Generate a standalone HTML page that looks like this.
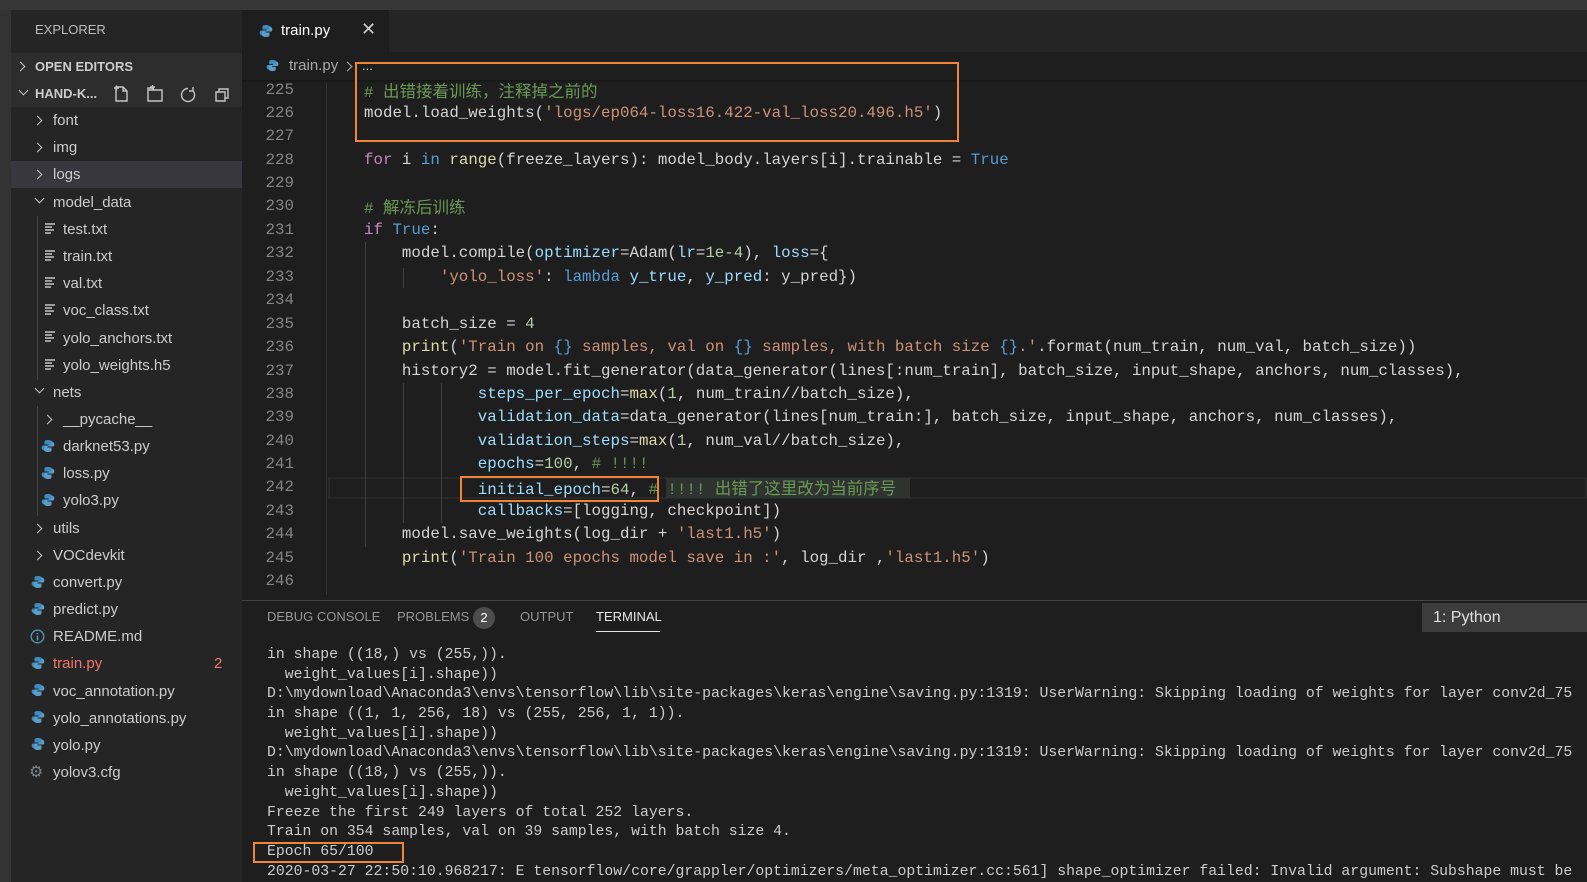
<!DOCTYPE html>
<html><head><meta charset="utf-8"><style>
*{margin:0;padding:0;box-sizing:border-box}
body{width:1587px;height:882px;overflow:hidden;background:#1e1e1e;position:relative;font-family:"Liberation Sans","Noto Sans CJK SC",sans-serif}
.abs{position:absolute}
.side{left:11px;top:10px;width:231px;height:872px;background:#252526}
.row{position:absolute;height:27px;line-height:27px;font-size:15px;color:#cccccc;white-space:nowrap}
.chev{position:absolute;width:7px;height:7px;border-right:1.5px solid #c5c5c5;border-bottom:1.5px solid #c5c5c5}
.cr{transform:rotate(-45deg)}
.cd{transform:rotate(45deg)}
.code{position:absolute;left:364px;font-family:"Liberation Mono","Noto Sans CJK SC",monospace;font-size:15.8px;color:#d4d4d4;white-space:pre;line-height:23px}
.ln{position:absolute;left:250px;width:44px;text-align:right;font-family:"Liberation Mono",monospace;font-size:15.8px;color:#858585;line-height:23px}
.c{color:#6a9955}.s{color:#ce9178}.k{color:#569cd6}.p{color:#c586c0}.f{color:#dcdcaa}.v{color:#9cdcfe}.n{color:#b5cea8}
.cj{font-family:"Noto Sans CJK SC",sans-serif;font-size:16.5px}
.term{position:absolute;left:267px;font-family:"Liberation Mono",monospace;font-size:14.8px;color:#cccccc;white-space:pre;line-height:20px}
.box{position:absolute;border:2px solid #f0853a}
.guide{position:absolute;width:1px;background:#404040}
</style></head><body>
<div class="abs" style="left:0;top:0;width:1587px;height:10px;background:#373737"></div>
<div class="abs" style="left:0;top:10px;width:11px;height:872px;background:#333333"></div>
<div class="abs side"></div>
<div class="abs" style="left:35px;top:22px;font-size:13px;color:#bbbbbb">EXPLORER</div>
<div class="abs" style="left:11px;top:53px;width:231px;height:54px;background:#2d2d2e"></div>
<div class="abs" style="left:11px;top:161px;width:231px;height:27px;background:#37373d"></div>

<div class="chev cr" style="left:17px;top:63px"></div>
<div class="row" style="left:35px;top:53px;font-weight:bold;font-size:13px;color:#cccccc">OPEN EDITORS</div>
<div class="chev cd" style="left:20px;top:87px"></div>
<div class="row" style="left:35px;top:80px;font-weight:bold;font-size:13px">HAND-K...</div>
<svg class="abs" style="left:112px;top:84px" width="122" height="20" viewBox="0 0 122 20" fill="none" stroke="#c5c5c5" stroke-width="1.4">
<path d="M4 3h7l4 4v10H4z M11 3v4h4 M2 4h5 M4.5 1.5v5"/>
<path d="M36 6h14v11H36z M36 6V4h5l1 2 M38 3h5 M40.5 1v5"/>
<path d="M76 4.5a6.5 6.5 0 1 0 5 2.3 M81 3v4h-4"/>
<path d="M104 8h9v9h-9z M107 8V5h9v9h-3"/>
</svg>
<div class="chev cr" style="left:34px;top:117px"></div><div class="row" style="left:53px;top:107px">font</div>
<div class="chev cr" style="left:34px;top:144px"></div><div class="row" style="left:53px;top:134px">img</div>
<div class="chev cr" style="left:34px;top:171px"></div><div class="row" style="left:53px;top:161px">logs</div>
<div class="chev cd" style="left:36px;top:195px"></div><div class="row" style="left:53px;top:189px">model_data</div>
<div class="abs" style="left:37px;top:216px;width:1px;height:164px;background:#444"></div>
<div class="abs" style="left:37px;top:406px;width:1px;height:110px;background:#444"></div>
<svg width="0" height="0" style="position:absolute"><defs>
<symbol id="txt" viewBox="0 0 12 12"><path d="M1 2h10M1 5h7M1 8h9M1 11h6" stroke="#c5c5c5" stroke-width="1.4"/></symbol>
<symbol id="py" viewBox="0 0 14 14"><path d="M7 1C3 1 3.5 2.5 3.5 4v1.5h4v1H2C0.5 6.5 0.5 9 1 10s1.5 1.5 2.5 1.5V9.5c0-1 1-2 2-2h3.5c1 0 2-1 2-2V3c0-1-1.5-2-4-2z" fill="#3d8bbf"/><path d="M7 13c4 0 3.5-1.5 3.5-3V8.5h-4v-1H12c1.5 0 1.5-2.5 1-3.5S11.5 2.5 10.5 2.5v2c0 1-1 2-2 2H5c-1 0-2 1-2 2V11c0 1 1.5 2 4 2z" fill="#5a9fc9"/></symbol>
</defs></svg>
<svg class="abs" style="left:44px;top:222px" width="12" height="12"><use href="#txt"/></svg><div class="row" style="left:63px;top:216px">test.txt</div>
<svg class="abs" style="left:44px;top:249px" width="12" height="12"><use href="#txt"/></svg><div class="row" style="left:63px;top:243px">train.txt</div>
<svg class="abs" style="left:44px;top:276px" width="12" height="12"><use href="#txt"/></svg><div class="row" style="left:63px;top:270px">val.txt</div>
<svg class="abs" style="left:44px;top:303px" width="12" height="12"><use href="#txt"/></svg><div class="row" style="left:63px;top:297px">voc_class.txt</div>
<svg class="abs" style="left:44px;top:330px" width="12" height="12"><use href="#txt"/></svg><div class="row" style="left:63px;top:325px">yolo_anchors.txt</div>
<svg class="abs" style="left:44px;top:358px" width="12" height="12"><use href="#txt"/></svg><div class="row" style="left:63px;top:352px">yolo_weights.h5</div>
<div class="chev cd" style="left:36px;top:385px"></div><div class="row" style="left:53px;top:379px">nets</div>
<div class="chev cr" style="left:44px;top:416px"></div><div class="row" style="left:63px;top:406px">__pycache__</div>
<svg class="abs" style="left:41px;top:439px" width="14" height="14"><use href="#py"/></svg><div class="row" style="left:63px;top:433px">darknet53.py</div>
<svg class="abs" style="left:41px;top:466px" width="14" height="14"><use href="#py"/></svg><div class="row" style="left:63px;top:460px">loss.py</div>
<svg class="abs" style="left:41px;top:493px" width="14" height="14"><use href="#py"/></svg><div class="row" style="left:63px;top:487px">yolo3.py</div>
<div class="chev cr" style="left:34px;top:525px"></div><div class="row" style="left:53px;top:515px">utils</div>
<div class="chev cr" style="left:34px;top:552px"></div><div class="row" style="left:53px;top:542px">VOCdevkit</div>
<svg class="abs" style="left:31px;top:575px" width="14" height="14"><use href="#py"/></svg><div class="row" style="left:53px;top:569px">convert.py</div>
<svg class="abs" style="left:31px;top:602px" width="14" height="14"><use href="#py"/></svg><div class="row" style="left:53px;top:596px">predict.py</div>
<svg class="abs" style="left:30px;top:629px" width="15" height="15" viewBox="0 0 15 15"><circle cx="7.5" cy="7.5" r="6.3" fill="none" stroke="#519aba" stroke-width="1.3"/><path d="M7.5 6.5v5M7.5 4v1.3" stroke="#519aba" stroke-width="1.5"/></svg><div class="row" style="left:53px;top:623px">README.md</div>
<svg class="abs" style="left:31px;top:656px" width="14" height="14"><use href="#py"/></svg><div class="row" style="left:53px;top:650px;color:#f0776b">train.py</div><div class="row" style="left:214px;top:650px;color:#f0776b">2</div>
<svg class="abs" style="left:31px;top:683px" width="14" height="14"><use href="#py"/></svg><div class="row" style="left:53px;top:678px">voc_annotation.py</div>
<svg class="abs" style="left:31px;top:710px" width="14" height="14"><use href="#py"/></svg><div class="row" style="left:53px;top:705px">yolo_annotations.py</div>
<svg class="abs" style="left:31px;top:737px" width="14" height="14"><use href="#py"/></svg><div class="row" style="left:53px;top:732px">yolo.py</div>
<div class="abs" style="left:29px;top:762px;font-size:16px;color:#7e8488">⚙</div><div class="row" style="left:53px;top:759px">yolov3.cfg</div>

<!-- tabs -->
<div class="abs" style="left:242px;top:10px;width:1345px;height:42px;background:#252526"></div>
<div class="abs" style="left:242px;top:10px;width:147px;height:42px;background:#1e1e1e"></div>
<svg class="abs" style="left:259px;top:24px" width="14" height="14"><use href="#py"/></svg>
<div class="abs" style="left:281px;top:22px;font-size:15px;color:#ffffff">train.py</div>
<div class="abs" style="left:361px;top:19px;font-size:18px;color:#cccccc">✕</div>
<svg class="abs" style="left:266px;top:59px" width="13" height="13"><use href="#py"/></svg>
<div class="abs" style="left:289px;top:57px;font-size:15px;color:#a9a9a9">train.py</div>
<div class="chev cr" style="left:344px;top:63px;border-color:#a9a9a9"></div>
<div class="abs" style="left:362px;top:58px;font-size:13px;color:#cccccc">...</div>
<div class="abs" style="left:242px;top:80px;width:1345px;height:3px;background:linear-gradient(#161616,#1e1e1e)"></div>

<!-- line numbers -->
<div class="ln" style="top:79px">225</div><div class="ln" style="top:102px">226</div><div class="ln" style="top:125px">227</div><div class="ln" style="top:149px">228</div><div class="ln" style="top:172px">229</div><div class="ln" style="top:195px">230</div><div class="ln" style="top:219px">231</div><div class="ln" style="top:242px">232</div><div class="ln" style="top:266px">233</div><div class="ln" style="top:289px">234</div><div class="ln" style="top:313px">235</div><div class="ln" style="top:336px">236</div><div class="ln" style="top:360px">237</div><div class="ln" style="top:383px">238</div><div class="ln" style="top:406px">239</div><div class="ln" style="top:430px">240</div><div class="ln" style="top:453px">241</div><div class="ln" style="top:476px">242</div><div class="ln" style="top:500px">243</div><div class="ln" style="top:523px">244</div><div class="ln" style="top:547px">245</div><div class="ln" style="top:570px">246</div>
<div class="abs" style="left:326px;top:83px;width:1px;height:512px;background:#333"></div>

<div class="abs" style="left:328px;top:477px;width:1259px;height:22px;border:2px solid #282828"></div>
<div class="abs" style="left:666px;top:478px;width:244px;height:20px;background:#2f3330"></div>
<div class="guide" style="left:365px;top:242px;height:305px"></div>
<div class="guide" style="left:403px;top:268px;height:20px"></div>
<div class="guide" style="left:403px;top:383px;height:140px"></div>
<div class="guide" style="left:441px;top:383px;height:140px"></div>

<div class="code" style="top:79px"><span class="c"># <span class="cj">出错接着训练，注释掉之前的</span></span></div>
<div class="code" style="top:102px">model.load_weights(<span class="s">'logs/ep064-loss16.422-val_loss20.496.h5'</span>)</div>
<div class="code" style="top:149px"><span class="p">for</span> i <span class="k">in</span> <span class="f">range</span>(freeze_layers): model_body.layers[i].trainable = <span class="k">True</span></div>
<div class="code" style="top:195px"><span class="c"># <span class="cj">解冻后训练</span></span></div>
<div class="code" style="top:219px"><span class="p">if</span> <span class="k">True</span>:</div>
<div class="code" style="top:242px">    model.compile(<span class="v">optimizer</span>=Adam(<span class="v">lr</span>=<span class="n">1e-4</span>), <span class="v">loss</span>={</div>
<div class="code" style="top:266px">        <span class="s">'yolo_loss'</span>: <span class="k">lambda</span> <span class="v">y_true</span>, <span class="v">y_pred</span>: y_pred})</div>
<div class="code" style="top:313px">    batch_size = <span class="n">4</span></div>
<div class="code" style="top:336px">    <span class="f">print</span>(<span class="s">'Train on </span><span class="k">{}</span><span class="s"> samples, val on </span><span class="k">{}</span><span class="s"> samples, with batch size </span><span class="k">{}</span><span class="s">.'</span>.format(num_train, num_val, batch_size))</div>
<div class="code" style="top:360px">    history2 = model.fit_generator(data_generator(lines[:num_train], batch_size, input_shape, anchors, num_classes),</div>
<div class="code" style="top:383px">            <span class="v">steps_per_epoch</span>=<span class="f">max</span>(<span class="n">1</span>, num_train//batch_size),</div>
<div class="code" style="top:406px">            <span class="v">validation_data</span>=data_generator(lines[num_train:], batch_size, input_shape, anchors, num_classes),</div>
<div class="code" style="top:430px">            <span class="v">validation_steps</span>=<span class="f">max</span>(<span class="n">1</span>, num_val//batch_size),</div>
<div class="code" style="top:453px">            <span class="v">epochs</span>=<span class="n">100</span>, <span class="c"># !!!!</span></div>
<div class="code" style="top:476px">            <span class="v">initial_epoch</span>=<span class="n">64</span>, <span class="c"># !!!! <span class="cj">出错了这里改为当前序号</span></span></div>
<div class="code" style="top:500px">            <span class="v">callbacks</span>=[logging, checkpoint])</div>
<div class="code" style="top:523px">    model.save_weights(log_dir + <span class="s">'last1.h5'</span>)</div>
<div class="code" style="top:547px">    <span class="f">print</span>(<span class="s">'Train 100 epochs model save in :'</span>, log_dir ,<span class="s">'last1.h5'</span>)</div>

<div class="box" style="left:355px;top:62px;width:604px;height:80px"></div>
<div class="box" style="left:460px;top:476px;width:199px;height:26px"></div>

<!-- panel -->
<div class="abs" style="left:242px;top:600px;width:1345px;height:1px;background:#444"></div>
<div class="abs" style="left:267px;top:609px;font-size:13px;color:#969696">DEBUG CONSOLE</div>
<div class="abs" style="left:397px;top:609px;font-size:13px;color:#969696">PROBLEMS</div>
<div class="abs" style="left:473px;top:607px;width:22px;height:22px;border-radius:11px;background:#4d4d4d;color:#fff;font-size:13px;text-align:center;line-height:22px">2</div>
<div class="abs" style="left:520px;top:609px;font-size:13px;color:#969696">OUTPUT</div>
<div class="abs" style="left:596px;top:609px;font-size:13px;color:#e7e7e7">TERMINAL</div>
<div class="abs" style="left:596px;top:631px;width:64px;height:1px;background:#e7e7e7"></div>
<div class="abs" style="left:1422px;top:603px;width:165px;height:29px;background:#3c3c3c;color:#e0e0e0;font-size:16px;line-height:29px;padding-left:11px">1: Python</div>

<div class="term" style="top:645px">in shape ((18,) vs (255,)).</div>
<div class="term" style="top:665px">  weight_values[i].shape))</div>
<div class="term" style="top:684px">D:\mydownload\Anaconda3\envs\tensorflow\lib\site-packages\keras\engine\saving.py:1319: UserWarning: Skipping loading of weights for layer conv2d_75</div>
<div class="term" style="top:704px">in shape ((1, 1, 256, 18) vs (255, 256, 1, 1)).</div>
<div class="term" style="top:724px">  weight_values[i].shape))</div>
<div class="term" style="top:743px">D:\mydownload\Anaconda3\envs\tensorflow\lib\site-packages\keras\engine\saving.py:1319: UserWarning: Skipping loading of weights for layer conv2d_75</div>
<div class="term" style="top:763px">in shape ((18,) vs (255,)).</div>
<div class="term" style="top:783px">  weight_values[i].shape))</div>
<div class="term" style="top:803px">Freeze the first 249 layers of total 252 layers.</div>
<div class="term" style="top:822px">Train on 354 samples, val on 39 samples, with batch size 4.</div>
<div class="term" style="top:842px">Epoch 65/100</div>
<div class="term" style="top:862px">2020-03-27 22:50:10.968217: E tensorflow/core/grappler/optimizers/meta_optimizer.cc:561] shape_optimizer failed: Invalid argument: Subshape must be</div>
<div class="box" style="left:253px;top:842px;width:151px;height:21px"></div>
</body></html>
